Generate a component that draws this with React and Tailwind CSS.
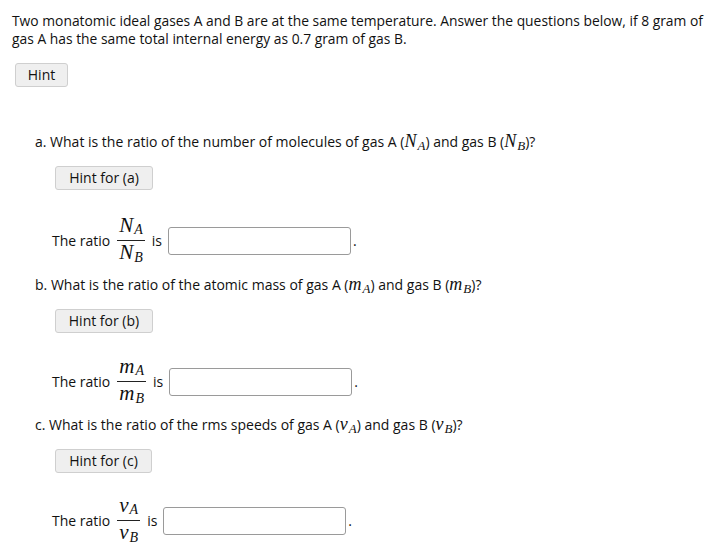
import React from "react";

const serif = { fontFamily: '"Liberation Serif", "DejaVu Serif", serif' };

function Sym({ base, sub, size = "text-[18px]", subSize = "text-[13px]", drop = "top-[3px]" }) {
  return (
    <span className={`italic ${size} leading-none`} style={serif}>
      {base}
      <span className={`${subSize} relative ${drop} ml-[1px]`}>{sub}</span>
    </span>
  );
}

function Frac({ base }) {
  return (
    <span className="inline-flex flex-col items-center mx-[7px] h-[44px]">
      <span className="h-[21px] flex items-end pb-[4px] px-[2px]">
        <Sym base={base} sub="A" size="text-[21px]" subSize="text-[14px]" drop="top-[2px]" />
      </span>
      <span className="self-stretch h-0 border-t-[1.5px] border-[#222]" />
      <span className="h-[22px] flex items-end px-[2px]">
        <Sym base={base} sub="B" size="text-[21px]" subSize="text-[14px]" drop="top-[3px]" />
      </span>
    </span>
  );
}

function Btn({ children, className = "" }) {
  return (
    <button className={`h-[24px] rounded-[3px] border border-[#cfcfcf] bg-[#efefef] text-[14px] text-[#111] leading-[22px] ${className}`}>
      {children}
    </button>
  );
}

function Section({ letter, question, base, hintW, top, rowMt }) {
  return (
    <div className={top}>
      <div className="ml-[23px] h-[18px] leading-[18px] whitespace-nowrap">
        {letter}. {question} (<Sym base={base} sub="A" />) and gas B (<Sym base={base} sub="B" />)?
      </div>
      <div className="ml-[43px] mt-[16px] h-[24px]">
        <Btn className={hintW}>Hint for ({letter})</Btn>
      </div>
      <div className={`ml-[40px] ${rowMt} flex items-center h-[44px]`}>
        <span>The ratio</span>
        <Frac base={base} />
        <span>is</span>
        <span className="ml-[6px] w-[183px] h-[28px] rounded-[3px] border border-[#9a9a9a] bg-white" />
        <span className="ml-[2px]">.</span>
      </div>
    </div>
  );
}

export default function App() {
  return (
    <div
      className="bg-white w-[713px] h-[547px] px-3 pt-3 text-[14px] leading-[18px] text-[#111] overflow-hidden"
      style={{ fontFamily: '"Open Sans", "Liberation Sans", sans-serif' }}
    >
      <p className="text-[13.85px] whitespace-nowrap">
        Two monatomic ideal gases A and B are at the same temperature. Answer the questions below, if 8 gram of
        <br />
        gas A has the same total internal energy as 0.7 gram of gas B.
      </p>
      <div className="mt-[15px] ml-[3px] h-[24px]">
        <Btn className="w-[53px]">Hint</Btn>
      </div>
      <Section top="mt-[45px]" rowMt="mt-[29px]" letter="a" question="What is the ratio of the number of molecules of gas A" base="N" hintW="w-[98px]" />
      <Section top="mt-[12px]" rowMt="mt-[27px]" letter="b" question="What is the ratio of the atomic mass of gas A" base="m" hintW="w-[98px]" />
      <Section top="mt-[11px]" rowMt="mt-[26px]" letter="c" question="What is the ratio of the rms speeds of gas A" base="v" hintW="w-[97px]" />
    </div>
  );
}
